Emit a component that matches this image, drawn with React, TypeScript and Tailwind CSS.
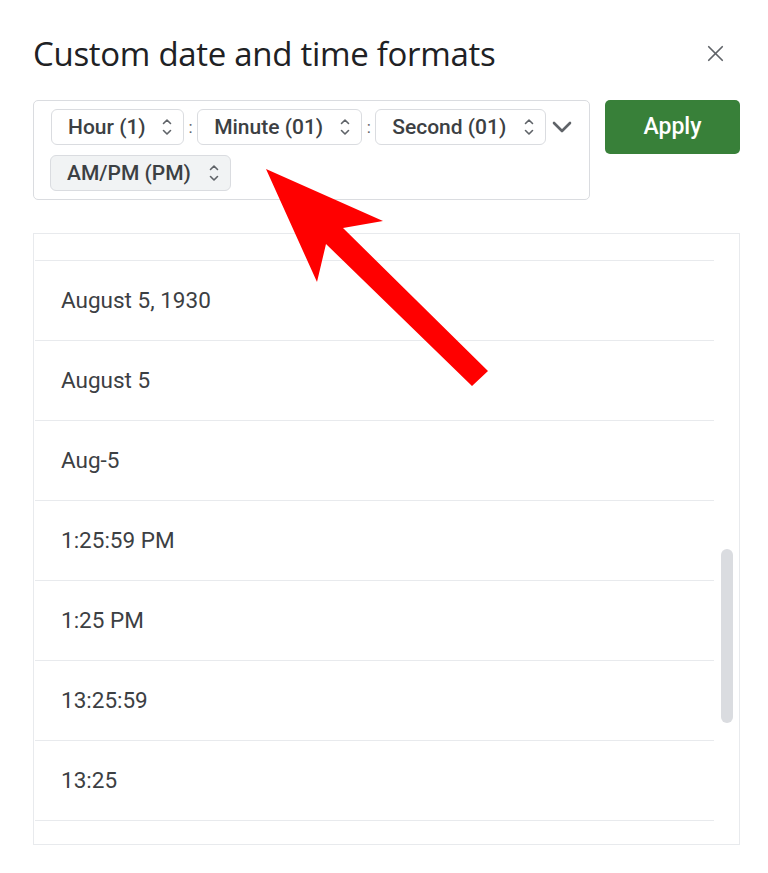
import { X } from "lucide-react";

const rows = ["August 5, 1930", "August 5", "Aug-5", "1:25:59 PM", "1:25 PM", "13:25:59", "13:25", ""];

function UpDown() {
  return (
    <svg width="10" height="18" viewBox="0 0 10 18" fill="none" stroke="#5f6368" strokeWidth="1.6" strokeLinecap="round" strokeLinejoin="round">
      <path d="M1.5 5.5 L5 2 L8.5 5.5" />
      <path d="M1.5 12.5 L5 16 L8.5 12.5" />
    </svg>
  );
}

function Chip({ label, active, width }: { label: string; active?: boolean; width: string }) {
  return (
    <div
      className={`${width} h-[36px] flex items-center justify-between pl-[16px] pr-[11px] rounded-[6px] border border-[#dadce0] ${active ? "bg-[#f1f3f4]" : "bg-white"}`}
    >
      <span className="text-[21px] font-medium text-[#3c4043] leading-none">{label}</span>
      <UpDown />
    </div>
  );
}

function Sep() {
  return <span className="text-[17px] text-[#5f6368] px-[4.5px] leading-none">:</span>;
}

export default function App() {
  return (
    <div className="relative w-[768px] h-[873px] bg-white overflow-hidden font-['Roboto',sans-serif]">
      <div className="flex items-center justify-between pl-[33px] pr-[39px] pt-[25px] h-[81px]">
        <h1 className="text-[33px] text-[#202124] leading-none font-['Open_Sans',sans-serif] tracking-[-0.3px]">
          Custom date and time formats
        </h1>
        <X size={27} strokeWidth={1.5} className="text-[#5f6368]" />
      </div>

      <div className="flex items-start pl-[33px] pt-[19px]">
        <div className="w-[557px] h-[100px] border border-[#dadce0] rounded-[5px] pl-[17px] pr-[14px] pt-[8px] flex flex-col gap-[10px]">
          <div className="flex items-center">
            <Chip label="Hour (1)" width="w-[133px]" />
            <Sep />
            <Chip label="Minute (01)" width="w-[165px]" />
            <Sep />
            <Chip label="Second (01)" width="w-[171px]" />
            <svg className="ml-[6px]" width="20" height="14" viewBox="0 0 20 14" fill="none" stroke="#5f6368" strokeWidth="2.6" strokeLinecap="round" strokeLinejoin="round">
              <path d="M2 3 L10 11 L18 3" />
            </svg>
          </div>
          <div className="flex -ml-[1px]">
            <Chip label="AM/PM (PM)" active width="w-[181px]" />
          </div>
        </div>
        <button className="ml-[15px] w-[135px] h-[54px] rounded-[5px] bg-[#388039] text-white text-[23px] font-medium">
          Apply
        </button>
      </div>

      <div className="relative ml-[33px] mt-[33px] w-[707px] h-[612px] border border-[#e8eaed] overflow-hidden">
        <div className="h-[26px]" />
        {rows.map((r, i) => (
          <div
            key={i}
            className="ml-[1px] w-[679px] h-[80px] border-t border-[#e8eaed] flex items-center pl-[26px] text-[22.5px] text-[#3c4043]"
          >
            {r}
          </div>
        ))}
        <div className="absolute left-[687px] top-[315px] w-[12px] h-[174px] rounded-full bg-[#dadce0]" />
      </div>

      <svg className="absolute inset-0 pointer-events-none" width="768" height="873" viewBox="0 0 768 873">
        <polygon points="266,169 383,221 343,228 488,371 472,386 326,244 317,282" fill="#ff0000" />
      </svg>
    </div>
  );
}
